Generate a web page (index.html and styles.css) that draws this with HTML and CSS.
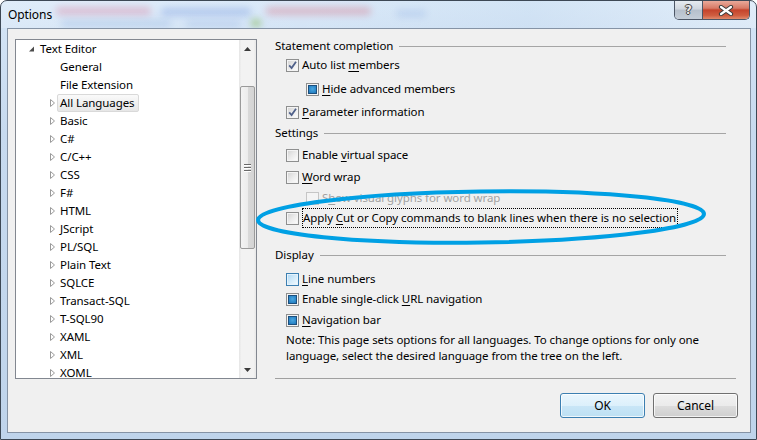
FILE: index.html
```html
<!DOCTYPE html>
<html>
<head>
<meta charset="utf-8">
<title>Options</title>
<link rel="stylesheet" href="styles.css">
</head>
<body>
<div class="window">
  <div class="titlebar">
    <div class="glass">
      <span class="blob b1"></span><span class="blob b2"></span><span class="blob b3"></span>
      <span class="blob b4"></span><span class="blob b5"></span><span class="blob b6"></span>
      <span class="blob b7"></span>
    </div>
    <span class="title">Options</span>
    <div class="caption">
      <div class="cap-help">?</div>
      <div class="cap-close">
        <svg width="16" height="11" viewBox="0 0 16 11">
          <path d="M3 2 L13 9 M3 9 L13 2" stroke="#3b3b3b" stroke-width="4.2" stroke-linecap="round" fill="none"/>
          <path d="M3 2 L13 9 M3 9 L13 2" stroke="#ffffff" stroke-width="2.2" stroke-linecap="round" fill="none"/>
        </svg>
      </div>
    </div>
  </div>

  <div class="client">
    <div class="main">
      <div class="tree">
        <div class="tree-list">
          <div class="node lvl0"><span class="exp"><svg width="10" height="10" viewBox="0 0 10 10"><path d="M7 2.5 L7 7.5 L2 7.5 Z" fill="#4c4c4c"/></svg></span><span class="lbl">Text Editor</span></div>
          <div class="node lvl1"><span class="exp"></span><span class="lbl">General</span></div>
          <div class="node lvl1"><span class="exp"></span><span class="lbl">File Extension</span></div>
          <div class="node lvl1"><span class="exp"><svg width="10" height="10" viewBox="0 0 10 10"><path d="M3.5 1.5 L7.5 5 L3.5 8.5 Z" fill="#fff" stroke="#9a9a9a"/></svg></span><span class="lbl selected">All Languages</span></div>
          <div class="node lvl1"><span class="exp"><svg width="10" height="10" viewBox="0 0 10 10"><path d="M3.5 1.5 L7.5 5 L3.5 8.5 Z" fill="#fff" stroke="#9a9a9a"/></svg></span><span class="lbl">Basic</span></div>
          <div class="node lvl1"><span class="exp"><svg width="10" height="10" viewBox="0 0 10 10"><path d="M3.5 1.5 L7.5 5 L3.5 8.5 Z" fill="#fff" stroke="#9a9a9a"/></svg></span><span class="lbl">C#</span></div>
          <div class="node lvl1"><span class="exp"><svg width="10" height="10" viewBox="0 0 10 10"><path d="M3.5 1.5 L7.5 5 L3.5 8.5 Z" fill="#fff" stroke="#9a9a9a"/></svg></span><span class="lbl">C/C++</span></div>
          <div class="node lvl1"><span class="exp"><svg width="10" height="10" viewBox="0 0 10 10"><path d="M3.5 1.5 L7.5 5 L3.5 8.5 Z" fill="#fff" stroke="#9a9a9a"/></svg></span><span class="lbl">CSS</span></div>
          <div class="node lvl1"><span class="exp"><svg width="10" height="10" viewBox="0 0 10 10"><path d="M3.5 1.5 L7.5 5 L3.5 8.5 Z" fill="#fff" stroke="#9a9a9a"/></svg></span><span class="lbl">F#</span></div>
          <div class="node lvl1"><span class="exp"><svg width="10" height="10" viewBox="0 0 10 10"><path d="M3.5 1.5 L7.5 5 L3.5 8.5 Z" fill="#fff" stroke="#9a9a9a"/></svg></span><span class="lbl">HTML</span></div>
          <div class="node lvl1"><span class="exp"><svg width="10" height="10" viewBox="0 0 10 10"><path d="M3.5 1.5 L7.5 5 L3.5 8.5 Z" fill="#fff" stroke="#9a9a9a"/></svg></span><span class="lbl">JScript</span></div>
          <div class="node lvl1"><span class="exp"><svg width="10" height="10" viewBox="0 0 10 10"><path d="M3.5 1.5 L7.5 5 L3.5 8.5 Z" fill="#fff" stroke="#9a9a9a"/></svg></span><span class="lbl">PL/SQL</span></div>
          <div class="node lvl1"><span class="exp"><svg width="10" height="10" viewBox="0 0 10 10"><path d="M3.5 1.5 L7.5 5 L3.5 8.5 Z" fill="#fff" stroke="#9a9a9a"/></svg></span><span class="lbl">Plain Text</span></div>
          <div class="node lvl1"><span class="exp"><svg width="10" height="10" viewBox="0 0 10 10"><path d="M3.5 1.5 L7.5 5 L3.5 8.5 Z" fill="#fff" stroke="#9a9a9a"/></svg></span><span class="lbl">SQLCE</span></div>
          <div class="node lvl1"><span class="exp"><svg width="10" height="10" viewBox="0 0 10 10"><path d="M3.5 1.5 L7.5 5 L3.5 8.5 Z" fill="#fff" stroke="#9a9a9a"/></svg></span><span class="lbl">Transact-SQL</span></div>
          <div class="node lvl1"><span class="exp"><svg width="10" height="10" viewBox="0 0 10 10"><path d="M3.5 1.5 L7.5 5 L3.5 8.5 Z" fill="#fff" stroke="#9a9a9a"/></svg></span><span class="lbl">T-SQL90</span></div>
          <div class="node lvl1"><span class="exp"><svg width="10" height="10" viewBox="0 0 10 10"><path d="M3.5 1.5 L7.5 5 L3.5 8.5 Z" fill="#fff" stroke="#9a9a9a"/></svg></span><span class="lbl">XAML</span></div>
          <div class="node lvl1"><span class="exp"><svg width="10" height="10" viewBox="0 0 10 10"><path d="M3.5 1.5 L7.5 5 L3.5 8.5 Z" fill="#fff" stroke="#9a9a9a"/></svg></span><span class="lbl">XML</span></div>
          <div class="node lvl1"><span class="exp"><svg width="10" height="10" viewBox="0 0 10 10"><path d="M3.5 1.5 L7.5 5 L3.5 8.5 Z" fill="#fff" stroke="#9a9a9a"/></svg></span><span class="lbl">XOML</span></div>
        </div>
        <div class="scrollbar">
          <div class="sb-btn"><svg width="7" height="4" viewBox="0 0 7 4"><path d="M0 4 L3.5 0 L7 4 Z" fill="#3a3a3a"/></svg></div>
          <div class="sb-track">
            <div class="sb-thumb"><span class="grip"></span><span class="grip"></span><span class="grip"></span></div>
          </div>
          <div class="sb-btn"><svg width="7" height="4" viewBox="0 0 7 4"><path d="M0 0 L3.5 4 L7 0 Z" fill="#3a3a3a"/></svg></div>
        </div>
      </div>

      <div class="panel">
        <div class="heading"><span>Statement completion</span><span class="rule"></span></div>
        <div class="row mt-1"><span class="cb"><span class="in"><svg width="9" height="9" viewBox="0 0 9 9"><path d="M1.2 4.4 L3.6 7 L8 0.8" stroke="#50618a" stroke-width="1.8" fill="none"/></svg></span></span><span class="txt">Auto list <u>m</u>embers</span></div>
        <div class="row sub mt-4"><span class="cb"><span class="in fill"></span></span><span class="txt"><u>H</u>ide advanced members</span></div>
        <div class="row mt-3"><span class="cb"><span class="in"><svg width="9" height="9" viewBox="0 0 9 9"><path d="M1.2 4.4 L3.6 7 L8 0.8" stroke="#50618a" stroke-width="1.8" fill="none"/></svg></span></span><span class="txt"><u>P</u>arameter information</span></div>

        <div class="heading mt-3"><span>Settings</span><span class="rule"></span></div>
        <div class="row mt-4"><span class="cb"><span class="in"></span></span><span class="txt">Enable <u>v</u>irtual space</span></div>
        <div class="row mt-2"><span class="cb"><span class="in"></span></span><span class="txt"><u>W</u>ord wrap</span></div>
        <div class="row sub mt-1"><span class="cb disabled"><span class="in"></span></span><span class="txt dim">S<u>h</u>ow visual glyphs for word wrap</span></div>
        <div class="row"><span class="cb"><span class="in"></span></span><span class="txt focus">Apply <u>C</u>ut or Copy commands to blank lines when there is no selection</span></div>

        <div class="heading mt-19"><span>Display</span><span class="rule"></span></div>
        <div class="row mt-6"><span class="cb hot"><span class="in"></span></span><span class="txt"><u>L</u>ine numbers</span></div>
        <div class="row"><span class="cb"><span class="in fill"></span></span><span class="txt">Enable single-click <u>U</u>RL navigation</span></div>
        <div class="row mt-1"><span class="cb"><span class="in fill"></span></span><span class="txt"><u>N</u>avigation bar</span></div>
        <p class="note">Note: This page sets options for all languages. To change options for only one<br>language, select the desired language from the tree on the left.</p>
      </div>
    </div>

    <div class="buttons">
      <div class="btn default">OK</div>
      <div class="btn">Cancel</div>
    </div>
  </div>

  <svg class="annotation" width="757" height="440" viewBox="0 0 757 440">
    <ellipse cx="481" cy="217" rx="223" ry="25.5" transform="rotate(-0.8 481 217)" fill="none" stroke="#00a0e4" stroke-width="4"/>
  </svg>
</div>
</body>
</html>
```
FILE: styles.css
```css
html, body {
  margin: 0;
  padding: 0;
  background: #ffffff;
}

body {
  font-family: "Noto Sans", "Open Sans", "DejaVu Sans", sans-serif;
  font-size: 11.5px;
  letter-spacing: -0.08px;
  color: #000;
}

.window {
  position: relative;
  width: 757px;
  height: 440px;
  box-sizing: border-box;
  border: 1px solid #3d4855;
  border-radius: 7px 7px 0 0;
  background: linear-gradient(180deg, #d8e8f8 0%, #d2e3f5 6%, #c7daef 30%, #bfd4eb 100%);
  display: flex;
  flex-direction: column;
  overflow: hidden;
}

/* ---------- title bar ---------- */
.titlebar {
  position: relative;
  height: 27px;
  flex-shrink: 0;
  display: flex;
  align-items: flex-start;
  background: linear-gradient(90deg, rgba(255,255,255,0.2), rgba(255,255,255,0.05) 40%, rgba(200,220,240,0.35) 70%, rgba(255,255,255,0.25));
}

.glass {
  position: absolute;
  inset: 0;
  overflow: hidden;
  pointer-events: none;
}

.blob {
  position: absolute;
  display: block;
  border-radius: 4px;
  filter: blur(3.5px);
}
.b1 { left: 55px;  top: 6px;  width: 95px;  height: 8px; background: rgba(215, 90, 130, 0.3); }
.b2 { left: 160px; top: 7px;  width: 90px;  height: 8px; background: rgba(90, 130, 215, 0.3); }
.b3 { left: 265px; top: 6px;  width: 105px; height: 8px; background: rgba(215, 80, 100, 0.3); }
.b4 { left: 60px;  top: 19px; width: 110px; height: 7px; background: rgba(110, 150, 215, 0.25); }
.b5 { left: 185px; top: 20px; width: 55px;  height: 6px; background: rgba(110, 150, 215, 0.25); }
.b6 { left: 250px; top: 18px; width: 10px;  height: 8px; background: rgba(120, 180, 60, 0.5); }
.b7 { left: 395px; top: 9px;  width: 30px;  height: 7px; background: rgba(100, 140, 215, 0.2); }

.title {
  position: relative;
  margin: 6px 0 0 7px;
  font-size: 12px;
  line-height: 16px;
  color: #000;
}

.caption {
  position: relative;
  margin-left: auto;
  margin-right: 6px;
  display: flex;
  border: 1px solid #4c5666;
  border-top: 0;
  border-radius: 0 0 5px 5px;
  overflow: hidden;
}

.cap-help {
  width: 27px;
  height: 18px;
  border-right: 1px solid #4c5666;
  background: linear-gradient(180deg, #e6ebf1 0%, #cfd6df 45%, #b6c0cc 50%, #c4cdd8 100%);
  display: flex;
  align-items: center;
  justify-content: center;
  font-family: "DejaVu Sans", sans-serif;
  font-weight: bold;
  font-size: 12px;
  color: #e8e8e8;
  text-shadow: 1px 0 0 #444, -1px 0 0 #444, 0 1px 0 #444, 0 -1px 0 #444;
}

.cap-close {
  width: 46px;
  height: 18px;
  background: linear-gradient(180deg, #e9a99a 0%, #d77a66 40%, #c4432c 50%, #cf5d40 80%, #e08a6c 100%);
  display: flex;
  align-items: center;
  justify-content: center;
}

/* ---------- client area ---------- */
.client {
  flex: 1;
  margin: 0 5px 6px 6px;
  border: 1px solid #8593a5;
  background: #f0f0f0;
  display: flex;
  flex-direction: column;
}

.main {
  display: flex;
  margin-top: 9px;
}

/* ---------- tree ---------- */
.tree {
  margin: 1px 0 0 7px;
  width: 242px;
  height: 340px;
  box-sizing: border-box;
  border: 1px solid #828790;
  background: #ffffff;
  display: flex;
}

.tree-list {
  flex: 1;
  overflow: hidden;
}

.node {
  height: 18px;
  display: flex;
  align-items: center;
  white-space: nowrap;
}

.lvl0 { padding-left: 11px; }
.lvl1 { padding-left: 31px; }

.exp {
  width: 10px;
  height: 10px;
  flex-shrink: 0;
  display: flex;
}

.lbl {
  height: 18px;
  line-height: 16px;
  box-sizing: border-box;
  padding: 0 3px 0 2px;
  border: 1px solid transparent;
  border-radius: 2px;
}

.lbl.selected {
  border-color: #d9d9d9;
  background: linear-gradient(180deg, #fafafa, #e6e6e6);
}

.scrollbar {
  width: 17px;
  display: flex;
  flex-direction: column;
  background: linear-gradient(90deg, #e5e5e5 0%, #f2f2f2 15%, #f2f2f2 85%, #e8e8e8 100%);
}

.sb-btn {
  height: 17px;
  display: flex;
  align-items: center;
  justify-content: center;
}

.sb-track {
  flex: 1;
  display: flex;
  flex-direction: column;
}

.sb-thumb {
  margin: 29px 1px 0 1px;
  height: 163px;
  box-sizing: border-box;
  border: 1px solid #9a9a9a;
  border-radius: 2px;
  background: linear-gradient(90deg, #f3f3f3 0%, #ececec 50%, #d9d9d9 51%, #d4d4d4 100%);
  display: flex;
  flex-direction: column;
  align-items: center;
  justify-content: center;
  gap: 2px;
}

.grip {
  display: block;
  width: 7px;
  height: 1px;
  background: #6a6a6a;
  box-shadow: 0 1px 0 #ffffff;
}

/* ---------- right panel ---------- */
.panel {
  margin-left: 18px;
  width: 461px;
  height: 341px;
  box-sizing: border-box;
  border-bottom: 1px solid #a0a0a0;
}

.heading {
  height: 16px;
  line-height: 16px;
  display: flex;
  align-items: center;
  margin-right: 10px;
  white-space: nowrap;
}

.rule {
  flex: 1;
  height: 1px;
  margin-left: 6px;
  background: #a5a5a5;
}

.row {
  height: 20px;
  display: flex;
  align-items: center;
  padding-left: 11px;
  white-space: nowrap;
}

.row.sub { padding-left: 31px; }

.mt-1 { margin-top: 1px; }
.mt-2 { margin-top: 2px; }
.mt-3 { margin-top: 3px; }
.mt-4 { margin-top: 4px; }
.mt-6 { margin-top: 6px; }
.mt-19 { margin-top: 19px; }

.txt {
  margin-left: 3px;
  line-height: 16px;
}

.txt u {
  text-decoration-thickness: 1px;
  text-underline-offset: 2px;
}

.txt.dim { color: #a2a2a2; }

.txt.focus {
  height: 20px;
  box-sizing: border-box;
  line-height: 18px;
  border: 1px dotted #000;
  margin-left: 3px;
  padding: 0 1px 0 0;
}

/* checkboxes */
.cb {
  width: 13px;
  height: 13px;
  box-sizing: border-box;
  border: 1px solid #8e8f8f;
  padding: 1px;
  background: #f4f4f4;
  flex-shrink: 0;
  display: flex;
}

.cb .in {
  width: 9px;
  height: 9px;
  display: block;
  background: linear-gradient(135deg, #d6d6d6 0%, #ebebeb 50%, #fbfbfb 100%);
}

.cb .in svg { display: block; }

.cb .in.fill {
  background: radial-gradient(circle at 50% 45%, #4aa7e0 0%, #2a86c8 55%, #1b5f98 100%);
  box-shadow: inset 0 0 0 1px #1d4f7d;
}

.cb.hot {
  border-color: #3c7fb1;
  background: #e6f3fc;
}
.cb.hot .in {
  background: linear-gradient(135deg, #b4dbf6 0%, #d3ebfa 50%, #eef8fe 100%);
}

.cb.disabled {
  border-color: #c6c6c6;
  background: #f4f4f4;
}
.cb.disabled .in {
  background: #f4f4f4;
}

.note {
  margin: 2px 0 0 11px;
  line-height: 16px;
  white-space: nowrap;
}

/* ---------- buttons ---------- */
.buttons {
  display: flex;
  justify-content: flex-end;
  gap: 8px;
  margin-top: 14px;
  padding-right: 12px;
}

.btn {
  width: 85px;
  height: 25px;
  box-sizing: border-box;
  border: 1px solid #707070;
  border-radius: 3px;
  background: linear-gradient(180deg, #f2f2f2 0%, #ebebeb 50%, #dddddd 51%, #cfcfcf 100%);
  box-shadow: inset 0 0 0 1px rgba(255,255,255,0.75);
  display: flex;
  align-items: center;
  justify-content: center;
  font-size: 12px;
}

.btn.default {
  border-color: #3c7fb1;
  background: linear-gradient(180deg, #eaf6fd 0%, #dcf0fb 50%, #c9e6f7 51%, #bde0f3 100%);
}

/* ---------- annotation ---------- */
.annotation {
  position: absolute;
  top: -1px;
  left: -1px;
  pointer-events: none;
}
```
